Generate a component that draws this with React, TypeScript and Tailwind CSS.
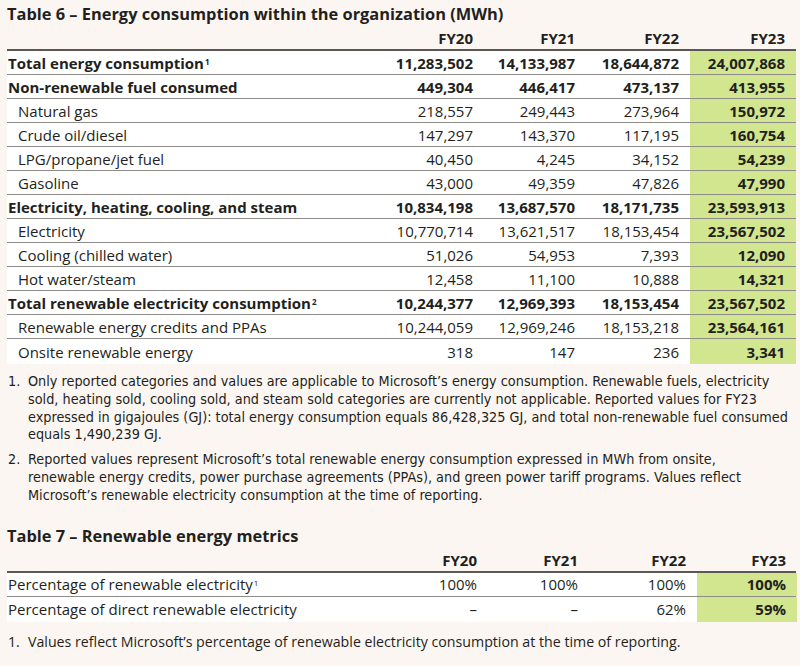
import React from "react";

interface Row {
  label: string;
  sup?: string;
  bold?: boolean;
  sub?: boolean;
  values: string[];
}

const energyRows: Row[] = [
  { label: "Total energy consumption", sup: "1", bold: true, values: ["11,283,502", "14,133,987", "18,644,872", "24,007,868"] },
  { label: "Non-renewable fuel consumed", bold: true, values: ["449,304", "446,417", "473,137", "413,955"] },
  { label: "Natural gas", sub: true, values: ["218,557", "249,443", "273,964", "150,972"] },
  { label: "Crude oil/diesel", sub: true, values: ["147,297", "143,370", "117,195", "160,754"] },
  { label: "LPG/propane/jet fuel", sub: true, values: ["40,450", "4,245", "34,152", "54,239"] },
  { label: "Gasoline", sub: true, values: ["43,000", "49,359", "47,826", "47,990"] },
  { label: "Electricity, heating, cooling, and steam", bold: true, values: ["10,834,198", "13,687,570", "18,171,735", "23,593,913"] },
  { label: "Electricity", sub: true, values: ["10,770,714", "13,621,517", "18,153,454", "23,567,502"] },
  { label: "Cooling (chilled water)", sub: true, values: ["51,026", "54,953", "7,393", "12,090"] },
  { label: "Hot water/steam", sub: true, values: ["12,458", "11,100", "10,888", "14,321"] },
  { label: "Total renewable electricity consumption", sup: "2", bold: true, values: ["10,244,377", "12,969,393", "18,153,454", "23,567,502"] },
  { label: "Renewable energy credits and PPAs", sub: true, values: ["10,244,059", "12,969,246", "18,153,218", "23,564,161"] },
  { label: "Onsite renewable energy", sub: true, values: ["318", "147", "236", "3,341"] },
];

const renewableRows: Row[] = [
  { label: "Percentage of renewable electricity", sup: "1", values: ["100%", "100%", "100%", "100%"] },
  { label: "Percentage of direct renewable electricity", values: ["–", "–", "62%", "59%"] },
];

const years = ["FY20", "FY21", "FY22", "FY23"];

function DataTable({ rows, cols }: { rows: Row[]; cols: string }) {
  return (
    <div>
      <div className={`grid ${cols} h-[26px] items-end border-b-2 border-[#5c5654] pb-[1px] text-[15px] font-bold`}>
        <div></div>
        {years.map((y) => (
          <div key={y} className="pr-[11px] text-right leading-[20px]">
            {y}
          </div>
        ))}
      </div>
      {rows.map((r, i) => {
        const last = i === rows.length - 1;
        return (
          <div
            key={r.label}
            className={`grid ${cols} bg-white text-[15px] ${last ? "h-[25px]" : "h-[24px] border-b border-[#8f8b89]"}`}
          >
            <div className={`flex items-center leading-[20px] ${r.sub ? "pl-[11px]" : "pl-[1px]"} ${r.bold ? "font-bold" : ""}`}>
              {r.label}
              {r.sup && <sup className="relative top-[-1px] ml-[1px] text-[8px]">{r.sup}</sup>}
            </div>
            {r.values.map((v, j) => (
              <div
                key={j}
                className={`flex items-center justify-end pr-[11px] leading-[20px] ${
                  j === 3 ? "bg-[#d1e68e] font-bold" : r.bold ? "font-bold" : ""
                }`}
              >
                {v}
              </div>
            ))}
          </div>
        );
      })}
    </div>
  );
}

function Note({ n, size, children }: { n: string; size: string; children: React.ReactNode }) {
  return (
    <div className={`flex ${size}`}>
      <span className="w-[21px] shrink-0 pl-[1px]">{n}</span>
      <p className="whitespace-nowrap">{children}</p>
    </div>
  );
}

export default function App() {
  return (
    <div
      className="h-[666px] w-[800px] overflow-hidden bg-[#fcf6f2] pl-[7px] pr-[4px] text-[#231f20]"
      style={{ fontFamily: "'Open Sans', 'Noto Sans', sans-serif" }}
    >
      <h2 className="pt-[2px] text-[16.4px] font-bold leading-[23px]">
        Table 6 – Energy consumption within the organization (MWh)
      </h2>
      <DataTable rows={energyRows} cols="grid-cols-[372px_105px_102px_104px_106px]" />

      <div
        className="mt-[9px] flex flex-col gap-[7px]"
        style={{ fontFamily: "'Liberation Sans Narrow', 'DejaVu Sans Condensed', Roboto, sans-serif" }}
      >
        <Note n="1." size="text-[14.3px] leading-[17.8px]">
          Only reported categories and values are applicable to Microsoft’s energy consumption. Renewable fuels, electricity
          <br />
          sold, heating sold, cooling sold, and steam sold categories are currently not applicable. Reported values for FY23
          <br />
          expressed in gigajoules (GJ): total energy consumption equals 86,428,325 GJ, and total non-renewable fuel consumed
          <br />
          equals 1,490,239 GJ.
        </Note>
        <Note n="2." size="text-[14.3px] leading-[17.8px]">
          Reported values represent Microsoft’s total renewable energy consumption expressed in MWh from onsite,
          <br />
          renewable energy credits, power purchase agreements (PPAs), and green power tariff programs. Values reflect
          <br />
          Microsoft’s renewable electricity consumption at the time of reporting.
        </Note>
      </div>

      <h2 className="mt-[19px] text-[16.4px] font-bold leading-[23px]">Table 7 – Renewable energy metrics</h2>
      <DataTable rows={renewableRows} cols="grid-cols-[377px_104px_101px_108px_100px]" />

      <div className="mt-[11px]">
        <Note n="1." size="text-[14.2px] leading-[17.6px]">
          Values reflect Microsoft’s percentage of renewable electricity consumption at the time of reporting.
        </Note>
      </div>
    </div>
  );
}
